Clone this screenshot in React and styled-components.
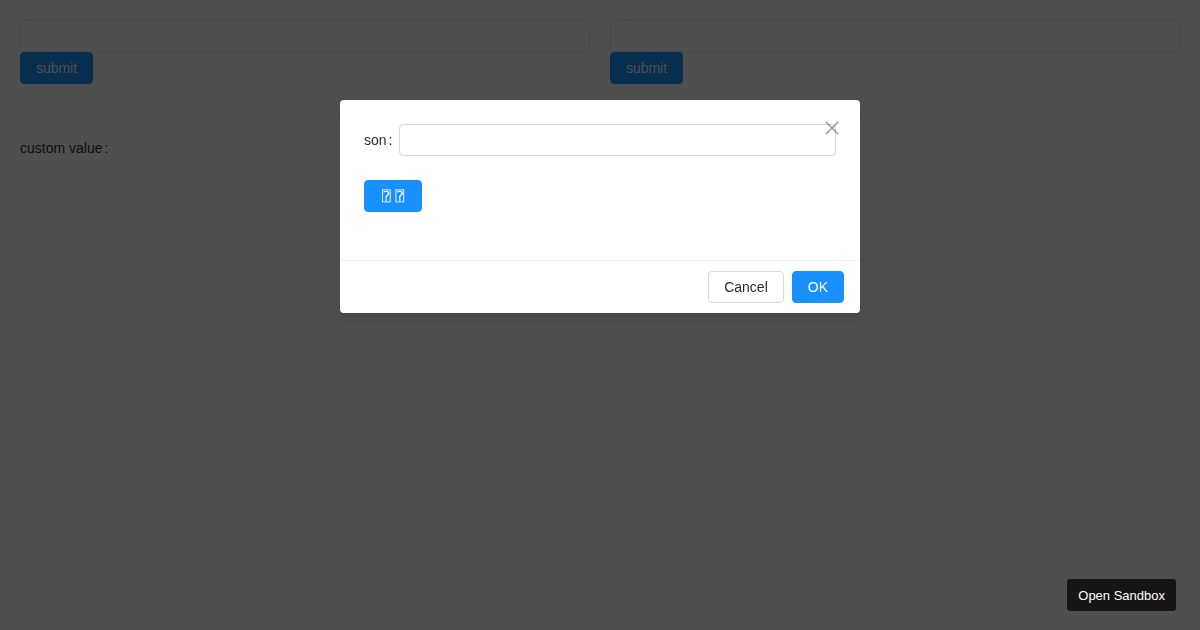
import React from "react";
import styled, { createGlobalStyle } from "styled-components";

const Global = createGlobalStyle`
  html, body {
    margin: 0;
    padding: 0;
    background: #fff;
    font-family: "Liberation Sans", Arial, sans-serif;
    font-size: 14px;
    color: rgba(0, 0, 0, 0.85);
  }
`;

const Page = styled.div`
  width: 1200px;
  height: 630px;
  padding: 20px;
  box-sizing: border-box;
`;

const Columns = styled.div`
  display: grid;
  grid-template-columns: 1fr 1fr;
  gap: 20px;
`;

const Column = styled.div`
  display: flex;
  flex-direction: column;
  align-items: flex-start;
`;

const Input = styled.input`
  box-sizing: border-box;
  width: 100%;
  height: 32px;
  border: 1px ${(p) => (p.dashed ? "dashed" : "solid")} #d9d9d9;
  border-radius: 4px;
  padding: 4px 11px;
  font: inherit;
  outline: none;
  background: #fff;
`;

const Button = styled.button`
  height: 32px;
  padding: 0 15px;
  border-radius: 4px;
  font-family: "Liberation Sans", Arial, sans-serif;
  font-size: 14px;
  cursor: pointer;
  border: 1px solid ${(p) => (p.primary ? "#1890ff" : "#d9d9d9")};
  background: ${(p) => (p.primary ? "#1890ff" : "#fff")};
  color: ${(p) => (p.primary ? "#fff" : "rgba(0, 0, 0, 0.85)")};
`;

const SubmitButton = styled(Button)`
  width: 73px;
  padding: 0;
`;

const Label = styled.label`
  white-space: nowrap;
  line-height: 20px;
  color: rgba(0, 0, 0, 0.85);
  &::after {
    content: ":";
    margin: 0 7px 0 2px;
  }
`;

const CustomValue = styled(Label)`
  display: block;
  margin-top: 54px;
`;

const Mask = styled.div`
  position: fixed;
  inset: 0;
  background: rgba(0, 0, 0, 0.69);
  display: flex;
  justify-content: center;
  align-items: flex-start;
  padding-top: 100px;
`;

const Modal = styled.div`
  position: relative;
  width: 520px;
  background: #fff;
  border-radius: 4px;
  box-shadow: 0 4px 12px rgba(0, 0, 0, 0.15);
`;

const Close = styled.button`
  position: absolute;
  top: 0;
  right: 0;
  width: 56px;
  height: 56px;
  border: none;
  background: transparent;
  display: flex;
  align-items: center;
  justify-content: center;
  padding: 0;
  cursor: pointer;
`;

const Body = styled.div`
  padding: 24px 24px 0;
  height: 160px;
  box-sizing: border-box;
`;

const FormRow = styled.div`
  display: flex;
  align-items: center;
  height: 32px;
  margin-bottom: 24px;
`;

const TofuButton = styled(Button)`
  width: 58px;
  padding: 0 0 0 5px;
  font-family: "DejaVu Sans Mono", "DejaVu Sans", monospace;
  font-size: 14px;
  letter-spacing: 5px;
`;

const Footer = styled.div`
  border-top: 1px dotted #e8e8e8;
  padding: 10px 16px;
  display: flex;
  justify-content: flex-end;
  gap: 8px;
`;

const Sandbox = styled.button`
  position: fixed;
  right: 24px;
  bottom: 19px;
  height: 32px;
  padding: 0 11px;
  background: #151515;
  color: #fff;
  border: none;
  border-radius: 3px;
  font-family: "Liberation Sans", Arial, sans-serif;
  font-size: 13px;
`;

const CloseIcon = () => (
  <svg width="14" height="14" viewBox="0 0 14 14">
    <path d="M1 1 L13 13 M13 1 L1 13" stroke="rgba(0,0,0,0.45)" strokeWidth="1.3" />
  </svg>
);

const App = () => (
  <>
    <Global />
    <Page>
      <Columns>
        <Column>
          <Input dashed />
          <SubmitButton primary>submit</SubmitButton>
          <CustomValue>custom value</CustomValue>
        </Column>
        <Column>
          <Input dashed />
          <SubmitButton primary>submit</SubmitButton>
        </Column>
      </Columns>
    </Page>
    <Mask>
      <Modal>
        <Body>
          <FormRow>
            <Label>son</Label>
            <Input />
          </FormRow>
          <TofuButton primary>⍰⍰</TofuButton>
        </Body>
        <Close>
          <CloseIcon />
        </Close>
        <Footer>
          <Button>Cancel</Button>
          <Button primary>OK</Button>
        </Footer>
      </Modal>
    </Mask>
    <Sandbox>Open Sandbox</Sandbox>
  </>
);

export default App;
